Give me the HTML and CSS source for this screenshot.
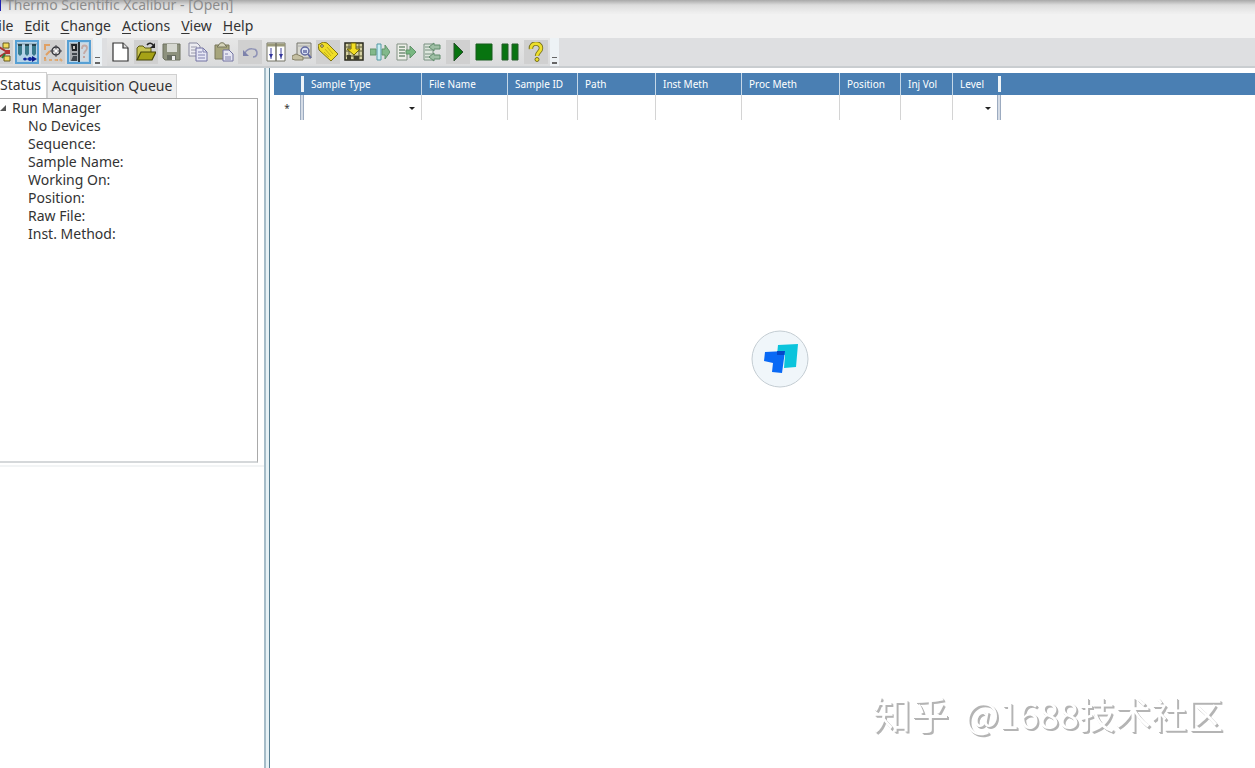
FILE: index.html
```html
<!DOCTYPE html>
<html lang="en">

<head>
    <meta charset="UTF-8" />
    <meta name="viewport" content="width=device-width, initial-scale=1.0" />
    <title>Thermo Scientific Xcalibur - [Open]</title>
    <link rel="stylesheet" href="styles.css">
</head>

<body>
    <div class="app">
        <header class="title-bar">
            <span class="title-icon"></span>
            <span class="title-text">Thermo Scientific Xcalibur - [Open]</span>
        </header>

        <nav class="menu-bar">
            <button type="button"><u>F</u>ile</button>
            <button type="button"><u>E</u>dit</button>
            <button type="button"><u>C</u>hange</button>
            <button type="button"><u>A</u>ctions</button>
            <button type="button"><u>V</u>iew</button>
            <button type="button"><u>H</u>elp</button>
        </nav>

        <div class="toolbar">
            <div class="tool-group">
                <button type="button" class="tool shaded" aria-label="Home page">
                    <svg viewBox="0 0 20 20"><path d="M1 3h7v5H1zM1 12h7v6H1z" fill="#d8a83a" /><path d="M8 5l8 5-8 5" fill="none" stroke="#a33" stroke-width="2" /><path d="M12 1h6v5h-6zM13 14h6v5h-6z" fill="#f1dc5b" stroke="#665a20" /><path d="M15 8h4v4h-4z" fill="#b83232" /><path d="M11 16l3-4" stroke="#2d7a35" stroke-width="2" /></svg>
                </button>
                <button type="button" class="tool active" aria-label="Sequence view">
                    <svg viewBox="0 0 20 20"><path d="M0 2h20" stroke="#8199a5" stroke-width="1" /><path d="M1 3h4v9l-2 2-2-2zM8 3h4v9l-2 2-2-2zM15 3h4v9l-2 2-2-2z" fill="#39798a" /><path d="M1 3h4M8 3h4M15 3h4" stroke="#27424c" stroke-width="2" /><path d="M6 17h10" stroke="#14259a" /><circle cx="8" cy="17" r="1.5" fill="#1126a0" /><circle cx="13" cy="17" r="2" fill="#1126a0" /><path d="M15 14l5 3-5 3z" fill="#0b1b8c" /></svg>
                </button>
                <button type="button" class="tool shaded" aria-label="Information view">
                    <svg viewBox="0 0 20 20"><path d="M2 8V3h5M3 13l4-4M2 15v4M6 18h3M12 18h3M17 17l2 2" fill="none" stroke="#e0a064" stroke-width="2" /><path d="M1 18h18" stroke="#d9b78c" stroke-dasharray="3 2" /><circle cx="13" cy="9" r="4" fill="#ddd" stroke="#33343a" stroke-width="1.5" /><path d="M13 3v12M7 9h12" stroke="#4a4a52" /><path d="M13 7l2 2-2 2-2-2z" fill="#fff" /></svg>
                </button>
                <button type="button" class="tool active" aria-label="Status view">
                    <svg viewBox="0 0 20 20"><path d="M1 1h8v18H1z" fill="#a5a9ad" /><path d="M2 2h6v7H3z" fill="#1f2226" /><path d="M4 4h2v3H4z" fill="#c9c4c0" /><path d="M3 11h5v2H3zM4 14h4v5H2z" fill="#40464c" /><path d="M10 0v20" stroke="#000" stroke-width="1.5" /><path d="M11 1h8v18h-8z" fill="#d0d9e1" /><path d="M13 7c0-5 5-4 5-1 0 3-3 3-3 6" fill="none" stroke="#c5aaa6" stroke-width="1.8" /><circle cx="15" cy="15" r="1" fill="#c08f86" /></svg>
                </button>
                <button type="button" class="overflow" aria-label="View toolbar options"></button>
            </div>

            <div class="tool-group">
                <button type="button" class="tool" aria-label="New">
                    <svg viewBox="0 0 20 20"><path d="M3 1h10l5 5v13H3z" fill="#fff" stroke="#333" stroke-width="1.2" /><path d="M13 1v5h5" fill="#ddd" stroke="#333" stroke-width="1.2" /></svg>
                </button>
                <button type="button" class="tool shaded" aria-label="Open">
                    <svg viewBox="0 0 20 20"><path d="M1 18V6l2-2h4l2 2h6v4" fill="#c7c351" stroke="#5d5b12" /><path d="M1 18l4-8h15l-4 8z" fill="#a6a216" stroke="#454408" stroke-width="1.2" /><path d="M11 3c2-3 5-2 7 1" fill="none" stroke="#222" stroke-width="1.4" /><path d="M19 1v5h-5z" fill="#222" /></svg>
                </button>
                <button type="button" class="tool" aria-label="Save">
                    <svg viewBox="0 0 20 20"><path d="M1 2h17v16H3l-2-2z" fill="#8d917d" stroke="#6c705e" /><path d="M5 2h10v8H5z" fill="#d6d8d1" /><path d="M5 13h9v5H5z" fill="#686d61" /><path d="M10 14h3v4h-3z" fill="#eee" /></svg>
                </button>
                <button type="button" class="tool" aria-label="Copy">
                    <svg viewBox="0 0 20 20"><path d="M1 1h8l3 3v10H1z" fill="#ececf1" stroke="#8889a0" /><path d="M3 5h6M3 8h6M3 11h6" stroke="#9a9aaa" /><path d="M8 6h7l4 4v9H8z" fill="#e6e7f5" stroke="#7273a2" /><path d="M15 6v4h4M10 10h4M10 13h7M10 16h7" fill="none" stroke="#8081ae" /></svg>
                </button>
                <button type="button" class="tool" aria-label="Paste">
                    <svg viewBox="0 0 20 20"><path d="M1 3h14v14H1z" fill="#a6a57c" stroke="#78775b" /><path d="M5 3c0-3 6-3 6 0l2 2H3z" fill="#d5d4ba" stroke="#77765c" /><path d="M9 8h6l4 4v7H9z" fill="#e6e7f2" stroke="#7273a2" /><path d="M11 12h3M11 15h6M11 17h6" stroke="#8081ae" /></svg>
                </button>
                <button type="button" class="tool shaded" aria-label="Undo">
                    <svg viewBox="0 0 20 20"><path d="M5 11c3-6 12-5 12 0 0 3-2 4-4 4" fill="none" stroke="#8f93b6" stroke-width="1.5" /><path d="M3 8v6h6z" fill="#7d82ab" /></svg>
                </button>
                <button type="button" class="tool" aria-label="Insert row">
                    <svg viewBox="0 0 20 20"><path d="M1 1h18v18H1z" fill="#fff" stroke="#747466" /><path d="M1 3h18" stroke="#9a9979" stroke-width="3" /><path d="M10 1v18" stroke="#747466" stroke-width="1.5" /><path d="M5 6v11M15 6v11" stroke="#4345a0" /><path d="M3 12h4l-2 4zM13 12h4l-2 4z" fill="#32359a" /></svg>
                </button>
                <button type="button" class="tool" aria-label="Column preview">
                    <svg viewBox="0 0 20 20"><path d="M5 1h14v15H5z" fill="#d9d9d1" stroke="#77776e" /><path d="M5 4h14" stroke="#aaa" /><circle cx="13" cy="9" r="4" fill="#dce3f5" stroke="#6269a0" stroke-width="1.5" /><path d="M11 8h4v3h-4z" fill="#8088b8" /><path d="M0 14l4-2 7 3v3H3l-3-1z" fill="#c4bfa1" stroke="#858066" /><path d="M16 12l3 4" stroke="#6269a0" stroke-width="2" /></svg>
                </button>
                <button type="button" class="tool shaded" aria-label="Tag">
                    <svg viewBox="0 0 20 20"><path d="M0 3l5-3 4 1 11 11-7 7L1 8z" fill="#efdd27" stroke="#807412" /><circle cx="4" cy="4" r="1.3" fill="#fff" stroke="#665c13" /><path d="M9 5l6 7M7 7l6 7M6 10l5 5" stroke="#c3b11d" /></svg>
                </button>
                <button type="button" class="tool" aria-label="Sample transfer">
                    <svg viewBox="0 0 20 20"><path d="M1 1h18v17H1z" fill="#d5d1a2" stroke="#29291d" stroke-width="1.5" /><path d="M1 5h18M1 9h18M1 14h18M5 1v17M10 1v17M15 1v17" stroke="#5c5a38" /><path d="M7 1h5v6h4l-6 6-7-6h4z" fill="#f3de22" stroke="#6e640b" /><path d="M3 13h4v5H3zM10 14h5v4h-5z" fill="#403f2b" /></svg>
                </button>
                <button type="button" class="tool" aria-label="Run sample">
                    <svg viewBox="0 0 20 20"><path d="M0 7h6v6H0zM12 7h3V3l5 7-5 7v-4h-3z" fill="#82b98b" stroke="#61946b" /><path d="M7 2h4v16H7z" fill="#c9edf3" stroke="#5299a3" /></svg>
                </button>
                <button type="button" class="tool" aria-label="Run sequence">
                    <svg viewBox="0 0 20 20"><path d="M1 2h10v16H1z" fill="#eef0e9" stroke="#829183" /><path d="M3 5h6M3 8h6M3 11h6M3 14h6" stroke="#769079" stroke-width="1.5" /><path d="M10 8h4V4l6 6-6 6v-4h-4z" fill="#78b781" stroke="#609269" /></svg>
                </button>
                <button type="button" class="tool" aria-label="Batch reprocess">
                    <svg viewBox="0 0 20 20"><path d="M2 2h9v16H2z" fill="#dde7dd" stroke="#789080" /><path d="M3 5h7M3 8h7M3 12h7M3 15h7" stroke="#789080" /><path d="M18 3h-6V1L7 5l5 4V7h6zM18 13h-6v-2l-5 4 5 4v-2h6z" fill="#9fbfa5" stroke="#618c6c" /></svg>
                </button>
                <button type="button" class="tool shaded" aria-label="Start analysis">
                    <svg viewBox="0 0 20 20"><path d="M6 1l9 9-9 9z" fill="#087410" stroke="#29502c" /></svg>
                </button>
                <button type="button" class="tool" aria-label="Stop analysis">
                    <svg viewBox="0 0 20 20"><path d="M2 2h16v16H2z" fill="#087410" stroke="#175d1d" /></svg>
                </button>
                <button type="button" class="tool" aria-label="Pause analysis">
                    <svg viewBox="0 0 20 20"><path d="M2 2h6v16H2zM12 2h6v16h-6z" fill="#087410" stroke="#245c29" /></svg>
                </button>
                <button type="button" class="tool shaded" aria-label="Help">
                    <svg viewBox="0 0 20 20"><path d="M5 7c-1-7 10-7 10-1 0 4-4 4-4 8" fill="none" stroke="#77701c" stroke-width="4.5" /><path d="M5 7c-1-7 10-7 10-1 0 4-4 4-4 8" fill="none" stroke="#eddf2c" stroke-width="2.8" /><circle cx="11" cy="17.5" r="2" fill="#eddf2c" stroke="#77701c" /></svg>
                </button>
                <button type="button" class="overflow" aria-label="Toolbar options"></button>
            </div>
        </div>

        <div class="workspace">
            <aside class="side-panel">
                <div class="status-pane">
                    <div class="tabs" role="tablist">
                        <button type="button" class="tab selected" role="tab" aria-selected="true">Status</button>
                        <button type="button" class="tab" role="tab" aria-selected="false">Acquisition Queue</button>
                    </div>
                    <div class="tree">
                        <details open>
                            <summary><span class="expander"></span>Run Manager</summary>
                            <ul>
                                <li>No Devices</li>
                                <li>Sequence:</li>
                                <li>Sample Name:</li>
                                <li>Working On:</li>
                                <li>Position:</li>
                                <li>Raw File:</li>
                                <li>Inst. Method:</li>
                            </ul>
                        </details>
                    </div>
                </div>
                <div class="lower-pane"></div>
            </aside>

            <div class="splitter"></div>

            <main class="content">
                <table class="sequence">
                    <colgroup>
                        <col class="col-marker">
                        <col class="col-type">
                        <col class="col-file">
                        <col class="col-id">
                        <col class="col-path">
                        <col class="col-inst">
                        <col class="col-proc">
                        <col class="col-position">
                        <col class="col-vol">
                        <col class="col-level">
                        <col>
                    </colgroup>
                    <thead>
                        <tr>
                            <th class="grip"></th>
                            <th>Sample Type</th>
                            <th>File Name</th>
                            <th>Sample ID</th>
                            <th>Path</th>
                            <th>Inst Meth</th>
                            <th>Proc Meth</th>
                            <th>Position</th>
                            <th>Inj Vol</th>
                            <th class="grip">Level</th>
                            <th class="filler"></th>
                        </tr>
                    </thead>
                    <tbody>
                        <tr>
                            <td class="grip marker">*</td>
                            <td class="drop"><select aria-label="Sample Type"><option></option></select></td>
                            <td></td>
                            <td></td>
                            <td></td>
                            <td></td>
                            <td></td>
                            <td></td>
                            <td></td>
                            <td class="drop grip"><select aria-label="Level"><option></option></select></td>
                            <td class="filler"></td>
                        </tr>
                    </tbody>
                </table>
            </main>
        </div>
    </div>

    <div class="badge">
        <svg viewBox="0 0 58 58">
            <circle cx="29" cy="29" r="28" fill="#f0f6fa" stroke="#c3ccd2" />
            <path d="M27 15L47 14L45 37L33 38L34 25L26 25Z" fill="#0bc4dc" />
            <path d="M14 22L34 21L31 43L21 42L22 33L13 31Z" fill="#0969f5" />
            <path d="M26 21L34 21L33 25L26 25Z" fill="#0547c8" />
        </svg>
    </div>

    <div class="watermark" lang="zh"><span class="site">知乎</span> <span>@1688技术社区</span></div>
</body>

</html>
```
FILE: styles.css
```css
* {
    box-sizing: border-box;
}

body {
    margin: 0;
    height: 100vh;
    overflow: hidden;
    background: #fff;
    color: #333;
    font-family: "Noto Sans", "Open Sans", sans-serif;
    font-size: 14px;
}

button {
    border: 0;
    padding: 0;
    background: none;
    color: inherit;
    font: inherit;
}

.app {
    display: flex;
    flex-direction: column;
    height: 100vh;
    margin-left: -12px;
}

/* title and menu */
.title-bar {
    display: flex;
    align-items: flex-end;
    gap: 5px;
    height: 14px;
    background: linear-gradient(#a8a8a8, #dcdcdc 5px, #efefef 13px);
    color: #8c8c8c;
}

.title-icon {
    width: 13px;
    height: 12px;
    margin-bottom: 3px;
    background: #2020b0;
}

.title-text {
    line-height: 18px;
}

.menu-bar {
    display: flex;
    align-items: center;
    gap: 11px;
    height: 24px;
    padding: 0 0 1px 3px;
    background: #f2f2f2;
}

.menu-bar u {
    text-underline-offset: 2px;
}

/* toolbar */
.toolbar {
    display: flex;
    gap: 5px;
    height: 30px;
    background: #dedfe1;
    border-bottom: 2px solid #c9cdd0;
}

.tool-group {
    display: flex;
    align-items: center;
    gap: 2px;
    padding-left: 1px;
    background: linear-gradient(#e6e6e6, #dadbdc);
}

.tool {
    width: 24px;
    height: 24px;
    padding: 2px;
}

.tool svg {
    display: block;
    width: 20px;
    height: 20px;
}

.tool.shaded {
    background: #d0d0d0;
}

.tool.active {
    background: #b5d3e8;
    border: 2px solid #57a0d4;
    padding: 0;
}

.overflow {
    position: relative;
    width: 9px;
    height: 28px;
    background: #edf2f5;
}

.overflow::after {
    content: "";
    position: absolute;
    left: 2px;
    bottom: 2px;
    width: 5px;
    height: 4px;
    border-top: 1px solid #666;
    border-bottom: 2px solid #666;
}

/* left side */
.workspace {
    display: flex;
    flex: 1;
    min-height: 0;
}

.side-panel {
    display: flex;
    flex-direction: column;
    width: 276px;
    padding-left: 12px;
}

.status-pane {
    display: flex;
    flex-direction: column;
    height: 57%;
    padding: 4px 6px 2px 0;
    border-bottom: 2px solid #f2f4f5;
}

.tabs {
    display: flex;
    align-items: flex-end;
}

.tab {
    height: 24px;
    padding: 0 4px 2px;
    background: #efefef;
    border: 1px solid #d0d0d0;
    border-bottom: 0;
}

.tab.selected {
    height: 26px;
    padding: 0 5px 2px 0;
    background: #fff;
    border-left: 0;
}

.tree {
    flex: 1;
    border: 1px solid #a9a9a9;
    border-left: 0;
    border-bottom: 2px solid #d5d8da;
    line-height: 18px;
}

.tree summary {
    display: flex;
    align-items: center;
    gap: 6px;
    list-style: none;
    height: 18px;
}

.expander {
    border-left: 6px solid transparent;
    border-bottom: 6px solid #555;
}

.tree ul {
    list-style: none;
    margin: 0;
    padding-left: 28px;
}

.lower-pane {
    flex: 1;
}

.splitter {
    width: 6px;
    background: #e6f1f5;
    border-left: 2px solid #a5bcc8;
    border-right: 1px solid #587f92;
}

/* sequence grid */
.content {
    flex: 1;
    min-width: 0;
    padding: 5px 0 0 4px;
}

.sequence {
    width: 100%;
    table-layout: fixed;
    border-collapse: separate;
    border-spacing: 0;
    font-size: 10px;
}

.col-marker {
    width: 30px;
}

.col-type {
    width: 118px;
}

.col-file,
.col-inst {
    width: 86px;
}

.col-id {
    width: 70px;
}

.col-path {
    width: 78px;
}

.col-proc {
    width: 98px;
}

.col-position {
    width: 61px;
}

.col-vol {
    width: 52px;
}

.col-level {
    width: 48px;
}

.sequence th {
    position: relative;
    height: 22px;
    padding: 0 0 0 7px;
    background: #4a7fb3;
    border-right: 1px solid #c5d8e8;
    color: #fff;
    font-weight: normal;
    text-align: left;
}

.sequence td {
    position: relative;
    height: 25px;
    padding: 0;
    border-right: 1px solid #d4d4d4;
}

.sequence th.grip,
.sequence .filler {
    border-right: 0;
}

.sequence th.grip::after {
    content: "";
    position: absolute;
    top: 3px;
    right: 0;
    width: 3px;
    height: 16px;
    background: #eef4f8;
}

.sequence td.grip {
    border-right: 4px double #9cabc0;
    background: linear-gradient(#d5dce6, #d5dce6) right / 4px 100% no-repeat border-box;
}

.sequence .marker {
    text-align: center;
}

.sequence select {
    display: block;
    width: 100%;
    height: 25px;
    border: 0;
    background: none;
    appearance: none;
}

.drop::after {
    content: "";
    position: absolute;
    top: 12px;
    right: 6px;
    border: 3px solid transparent;
    border-top-color: #222;
    border-bottom: 0;
    pointer-events: none;
}

/* floating items */
.badge {
    position: fixed;
    top: 330px;
    left: 751px;
    width: 58px;
    height: 58px;
}

.watermark {
    display: flex;
    align-items: baseline;
    gap: 16px;
    position: fixed;
    right: 32px;
    bottom: 28px;
    color: #fff;
    font-family: "Noto Sans CJK SC", sans-serif;
    font-size: 36px;
    line-height: 54px;
    text-shadow: 1px 1px 0 #b4b4b4, 2px 2px 0 #b4b4b4;
}

.watermark .site {
    font-size: 38px;
}
```
